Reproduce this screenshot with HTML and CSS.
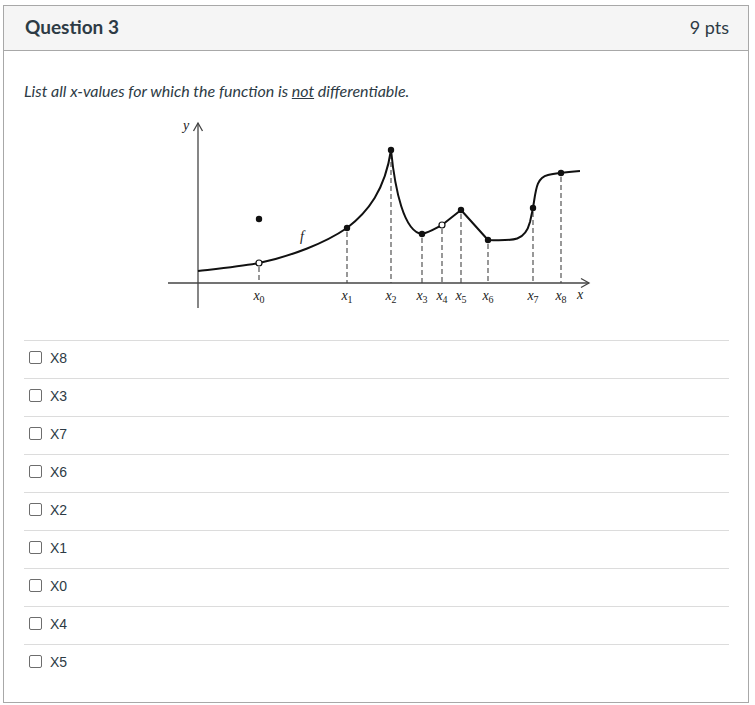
FILE: index.html
```html
<!DOCTYPE html>
<html>
<head>
<meta charset="utf-8">
<link rel="stylesheet" href="styles.css">
</head>
<body>
<div class="question">
  <div class="q-header">
    <span class="q-title">Question 3</span>
    <span class="q-pts">9 pts</span>
  </div>
  <div class="q-body">
    <p class="q-text">List all x-values for which the function is <u>not</u> differentiable.</p>
    <svg class="graph" width="440" height="200" viewBox="160 115 440 200" xmlns="http://www.w3.org/2000/svg">
      <g stroke="#444" stroke-width="1.3" fill="none">
        <line x1="168" y1="283" x2="589" y2="283"/>
        <polyline points="581,278.5 589,283 581,287.5"/>
        <line x1="198" y1="308" x2="198" y2="123"/>
        <polyline points="193.5,131 198,123 202.5,131"/>
      </g>
      <g stroke="#444" stroke-width="1.1" stroke-dasharray="5 3" fill="none">
        <line x1="259" y1="267" x2="259" y2="283"/>
        <line x1="347" y1="232" x2="347" y2="283"/>
        <line x1="391" y1="154" x2="391" y2="283"/>
        <line x1="422" y1="238" x2="422" y2="283"/>
        <line x1="442" y1="229" x2="442" y2="283"/>
        <line x1="461" y1="214" x2="461" y2="283"/>
        <line x1="488" y1="244" x2="488" y2="283"/>
        <line x1="533" y1="212" x2="533" y2="283"/>
        <line x1="561" y1="177" x2="561" y2="283"/>
      </g>
      <g stroke="#111" stroke-width="2" fill="none" stroke-linejoin="round">
        <path d="M198,271 C225,268 245,266 259,263 C292,256 325,243 347,228 C368,212 385,190 391,150"/>
        <path d="M391,150 C395,190 404,232 422,234 C430,232 436,228 442,225 L461,210 L488,240 C515,241 525,241 530,222 L533,208 C536,190 536,178 548,175 C556,173 568,172 580,171"/>
      </g>
      <g fill="#111">
        <circle cx="259" cy="219" r="3.2"/>
        <circle cx="347" cy="228" r="3.2"/>
        <circle cx="391" cy="150" r="3.2"/>
        <circle cx="422" cy="234" r="3.2"/>
        <circle cx="461" cy="210" r="3.2"/>
        <circle cx="488" cy="240" r="3.2"/>
        <circle cx="533" cy="208" r="3.2"/>
        <circle cx="561" cy="173" r="3.2"/>
      </g>
      <g fill="#fff" stroke="#111" stroke-width="1.2">
        <circle cx="259" cy="263" r="3"/>
        <circle cx="442" cy="225" r="3"/>
      </g>
      <g class="lbl" text-anchor="middle">
        <text x="186" y="130">y</text>
        <text x="302" y="241">f</text>
        <text x="580" y="299">x</text>
        <text x="259" y="300">x<tspan class="sub" dy="3">0</tspan></text>
        <text x="347" y="300">x<tspan class="sub" dy="3">1</tspan></text>
        <text x="391" y="300">x<tspan class="sub" dy="3">2</tspan></text>
        <text x="422" y="300">x<tspan class="sub" dy="3">3</tspan></text>
        <text x="442" y="300">x<tspan class="sub" dy="3">4</tspan></text>
        <text x="461" y="300">x<tspan class="sub" dy="3">5</tspan></text>
        <text x="488" y="300">x<tspan class="sub" dy="3">6</tspan></text>
        <text x="533" y="300">x<tspan class="sub" dy="3">7</tspan></text>
        <text x="561" y="300">x<tspan class="sub" dy="3">8</tspan></text>
      </g>
    </svg>
    <div class="answers">
      <label class="answer"><span class="box"></span><span class="opt">X8</span></label>
      <label class="answer"><span class="box"></span><span class="opt">X3</span></label>
      <label class="answer"><span class="box"></span><span class="opt">X7</span></label>
      <label class="answer"><span class="box"></span><span class="opt">X6</span></label>
      <label class="answer"><span class="box"></span><span class="opt">X2</span></label>
      <label class="answer"><span class="box"></span><span class="opt">X1</span></label>
      <label class="answer"><span class="box"></span><span class="opt">X0</span></label>
      <label class="answer"><span class="box"></span><span class="opt">X4</span></label>
      <label class="answer"><span class="box"></span><span class="opt">X5</span></label>
    </div>
  </div>
</div>
</body>
</html>
```
FILE: styles.css
```css
html, body {
  margin: 0;
  padding: 0;
  background: #fff;
}
body {
  padding: 5px 0 0 3px;
  font-family: Lato, "Liberation Sans", sans-serif;
  color: #2d3b45;
}
.question {
  width: 744px;
  height: 696px;
  border: 1px solid #a8a8a8;
  box-sizing: content-box;
}
.q-header {
  height: 45px;
  box-sizing: border-box;
  background: #f5f5f5;
  border-bottom: 1px solid #a8a8a8;
  display: flex;
  align-items: center;
  justify-content: space-between;
  padding: 0 19px 3px 21px;
}
.q-title {
  font-weight: 700;
  font-size: 19px;
}
.q-pts {
  font-size: 18px;
}
.q-body {
  padding: 0 19px 0 20px;
}
.q-text {
  margin: 0;
  padding-top: 28px;
  font-style: italic;
  font-size: 16px;
  line-height: 24px;
}
.graph {
  display: block;
  margin: 12px 0 0 136px;
}
.lbl text {
  font-family: "Liberation Serif", serif;
  font-style: italic;
  font-size: 14px;
  fill: #222;
}
.lbl .sub {
  font-style: normal;
  font-size: 10px;
}
.answers {
  margin-top: 25px;
}
.answer {
  display: flex;
  align-items: center;
  height: 37px;
  box-sizing: content-box;
  border-top: 1px solid #dcdcdc;
  font-family: "Liberation Sans", Arial, sans-serif;
  font-size: 14px;
  color: #2d3b45;
}
.answer .box, .answer .opt {
  position: relative;
  top: -2px;
}
.box {
  width: 11px;
  height: 11px;
  border: 1px solid #6d6d6d;
  border-radius: 2px;
  margin: 0 8px 0 5px;
  background: #fff;
}
```
